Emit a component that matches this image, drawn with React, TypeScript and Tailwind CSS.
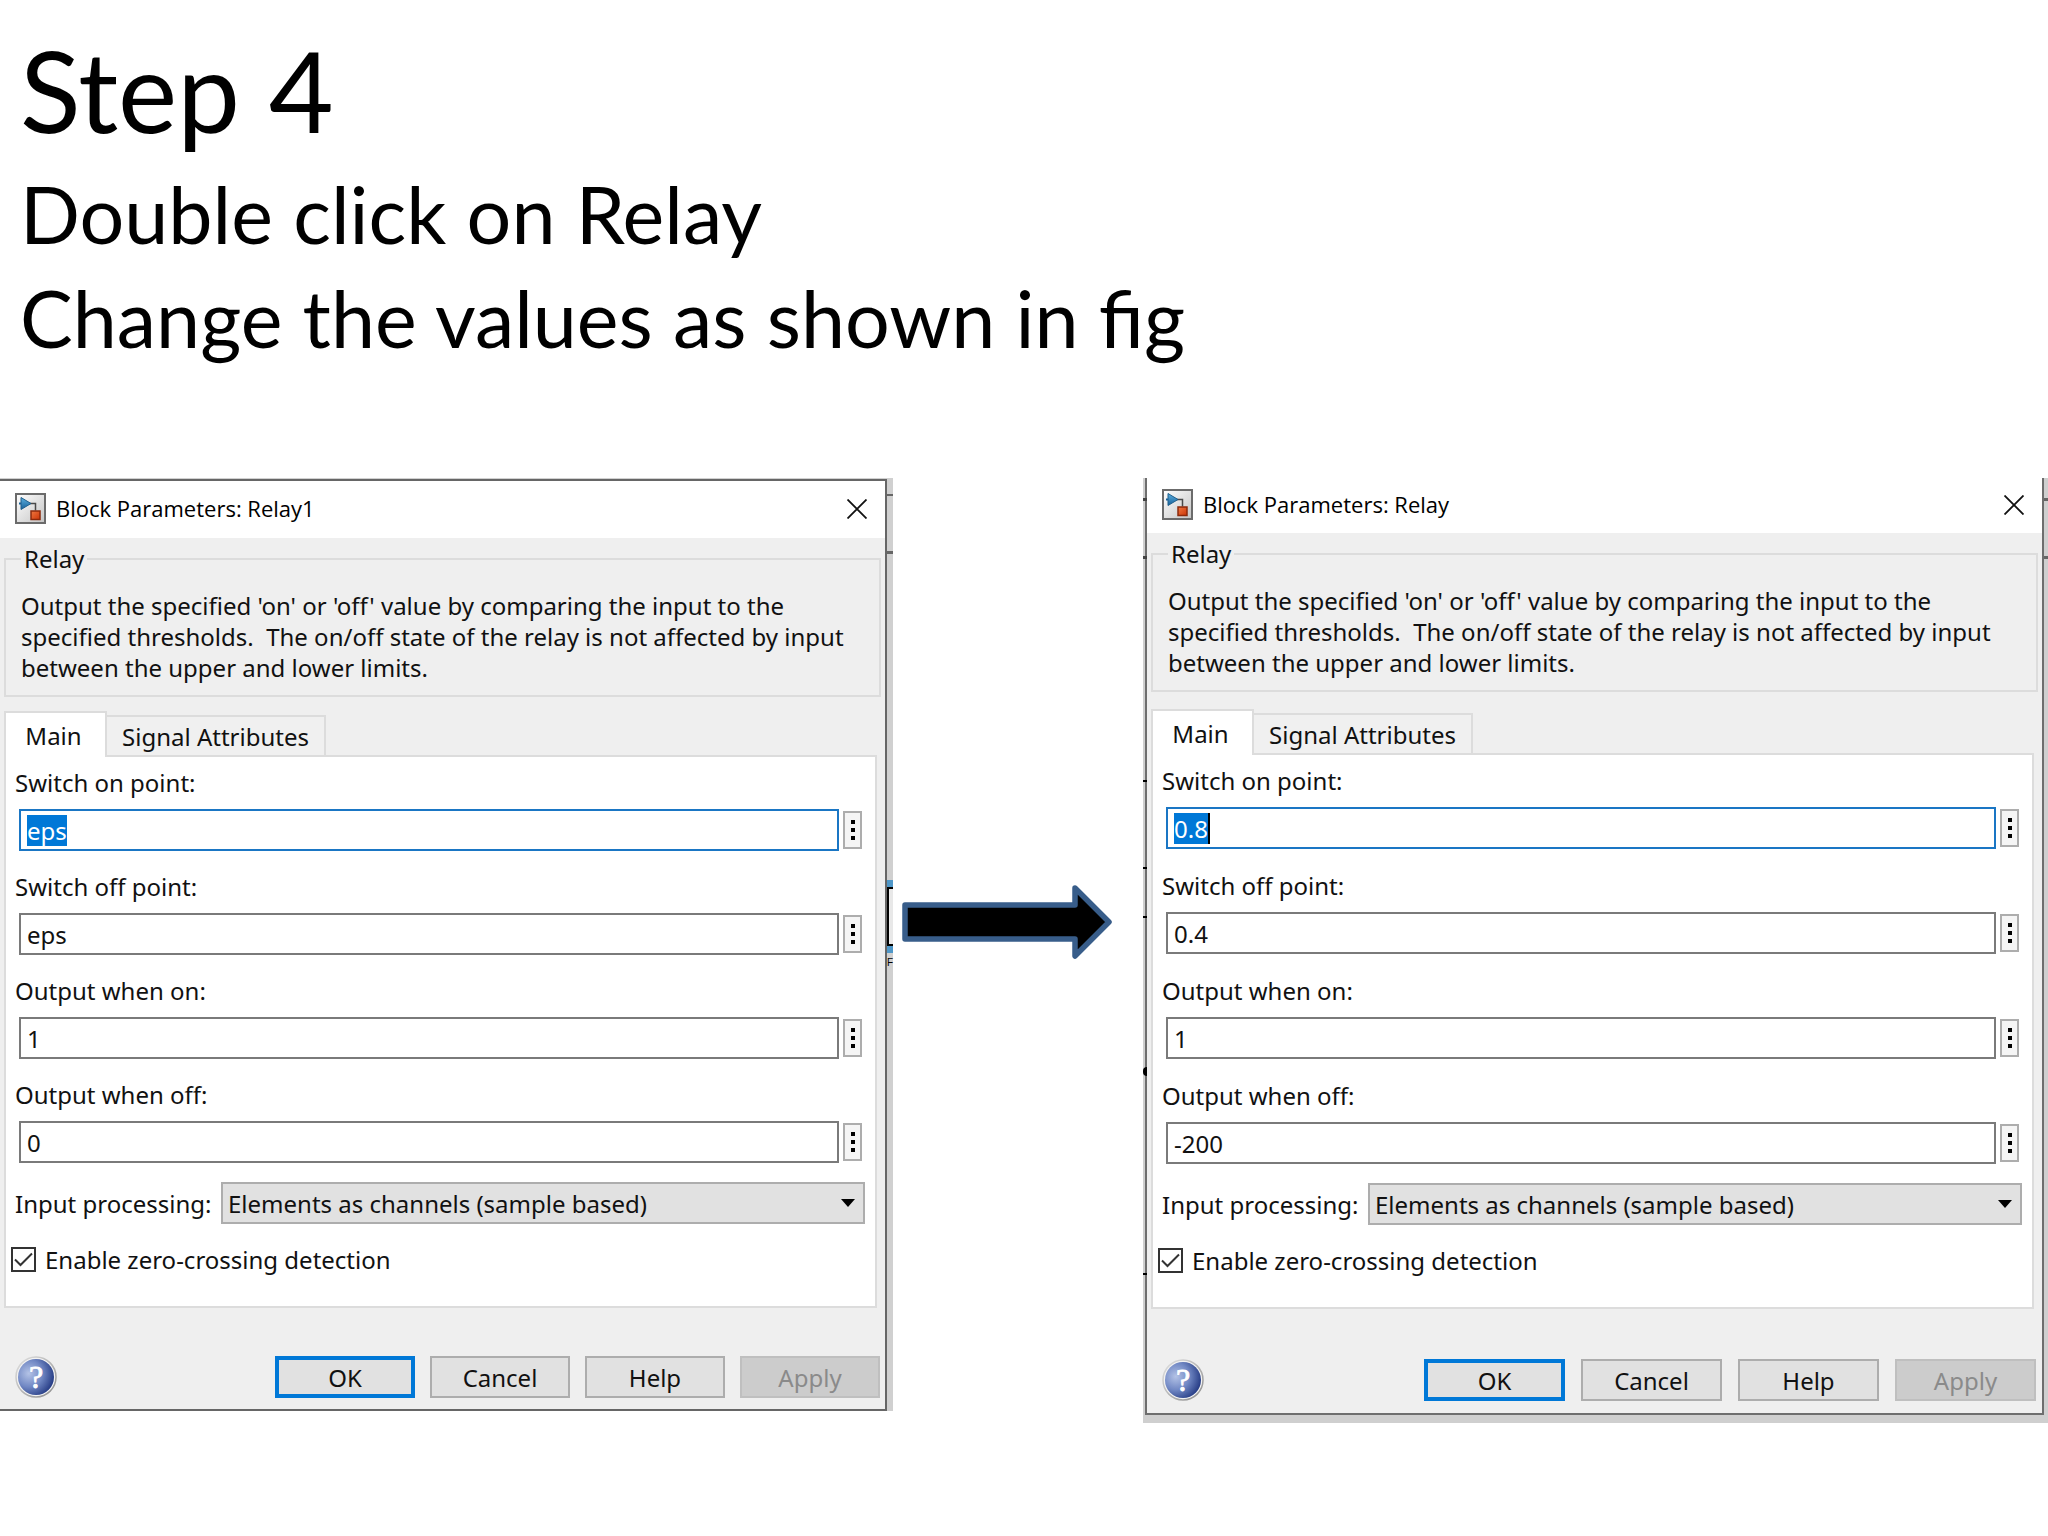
import clsx from "clsx";

type Field = { label: string; value: string; selected?: boolean; caret?: boolean };

type Look = {
  titleBar: string;
  group: string;
  tabs: string;
  rows: string;
  footer: string;
  button: string;
};

const relay1Fields: Field[] = [
  { label: "Switch on point:", value: "eps", selected: true },
  { label: "Switch off point:", value: "eps" },
  { label: "Output when on:", value: "1" },
  { label: "Output when off:", value: "0" },
];

const relayFields: Field[] = [
  { label: "Switch on point:", value: "0.8", selected: true, caret: true },
  { label: "Switch off point:", value: "0.4" },
  { label: "Output when on:", value: "1" },
  { label: "Output when off:", value: "-200" },
];

const description = `Output the specified 'on' or 'off' value by comparing the input to the
specified thresholds.  The on/off state of the relay is not affected by input
between the upper and lower limits.`;

const compact: Look = {
  titleBar: "h-[57px]",
  group: "mt-[5px]",
  tabs: "mt-[14px]",
  rows: "gap-5",
  footer: "gap-[15px] pt-12 pr-[5px] pb-[11px]",
  button: "w-[140px]",
};

const roomy: Look = {
  titleBar: "h-[55px]",
  group: "mt-[5px]",
  tabs: "mt-[17px]",
  rows: "gap-[21px]",
  footer: "gap-4 pt-[50px] pr-[6px] pb-3",
  button: "w-[141px]",
};

function BlockIcon() {
  return (
    <svg viewBox="0 0 31 31" className="size-[31px] shrink-0" aria-hidden="true">
      <defs>
        <linearGradient id="tile" x1="0" y1="0" x2="1" y2="1">
          <stop offset="0" stopColor="#ffffff" />
          <stop offset="1" stopColor="#c4c4c4" />
        </linearGradient>
        <linearGradient id="tri" x1="0" y1="0" x2="0" y2="1">
          <stop offset="0" stopColor="#5cb0e0" />
          <stop offset="1" stopColor="#17619a" />
        </linearGradient>
        <linearGradient id="sq" x1="0" y1="0" x2="1" y2="1">
          <stop offset="0" stopColor="#f07840" />
          <stop offset="1" stopColor="#cc3508" />
        </linearGradient>
      </defs>
      <rect x="1" y="1" width="29" height="29" fill="url(#tile)" stroke="#6b6b6b" strokeWidth="2" />
      <path d="M15 10.500h5.500v7" fill="none" stroke="#4a4a4a" strokeWidth="1.500" />
      <path d="M4 10.500h3" stroke="#17619a" strokeWidth="2" />
      <path d="M6 4.500 16 10.500 6 16.500Z" fill="url(#tri)" stroke="#1f5f8c" />
      <rect x="16" y="18" width="9" height="8.500" fill="url(#sq)" stroke="#8c2a0c" strokeWidth="1.500" />
    </svg>
  );
}

function HelpIcon() {
  return (
    <svg viewBox="0 0 42 42" className="size-[42px]" aria-hidden="true">
      <defs>
        <radialGradient id="ball" cx="0.3" cy="0.4" r="0.75">
          <stop offset="0" stopColor="#b4c3e6" />
          <stop offset="0.5" stopColor="#7188c4" />
          <stop offset="1" stopColor="#1f357f" />
        </radialGradient>
        <linearGradient id="rim" x1="0" y1="0" x2="1" y2="1">
          <stop offset="0" stopColor="#e2e2e2" />
          <stop offset="1" stopColor="#8c8c8c" />
        </linearGradient>
      </defs>
      <circle cx="21" cy="21" r="20" fill="#f2f2f2" stroke="url(#rim)" strokeWidth="1.500" />
      <circle cx="21" cy="21" r="18" fill="url(#ball)" />
      <text
        x="21"
        y="32"
        textAnchor="middle"
        fontSize="32"
        fill="#ffffff"
        stroke="#ffffff"
        strokeWidth="0.800"
        fontFamily="Liberation Serif, serif"
      >
        ?
      </text>
    </svg>
  );
}

function ParameterRow({ id, field }: { id: string; field: Field }) {
  return (
    <div>
      <label htmlFor={id} className="block pl-[9px]">
        {field.label}
      </label>
      <div className="mt-[11px] flex items-center gap-1 px-[13px]">
        <div
          className={clsx(
            "flex h-[42px] min-w-0 flex-1 items-center border-2 bg-white px-[6px]",
            field.selected ? "border-[#1a76c4]" : "border-[#7a7a7a]"
          )}
        >
          <input
            id={id}
            type="text"
            defaultValue={field.value}
            className={clsx(
              "h-[31px] outline-none",
              field.selected ? "field-sizing-content bg-[#0078d7] text-white" : "w-full",
              field.caret && "border-r-2 border-black"
            )}
          />
        </div>
        <button
          type="button"
          aria-label={`${field.label} more options`}
          className="flex h-[38px] w-[19px] flex-col items-center justify-center gap-1 border-2 border-[#adadad] bg-[#f5f5f5]"
        >
          <span className="size-1 bg-black" />
          <span className="size-1 bg-black" />
          <span className="size-1 bg-black" />
        </button>
      </div>
    </div>
  );
}

function BlockDialog({ id, title, fields, look }: { id: string; title: string; fields: Field[]; look: Look }) {
  const button = clsx("h-[42px]", look.button);

  return (
    <section
      aria-label={title}
      className="bg-[#efefef] font-['Noto_Sans',sans-serif] text-[24px] leading-[31px] text-[#111]"
    >
      <header className={clsx("flex items-center bg-white pr-[18px] pb-[2px] pl-[15px]", look.titleBar)}>
        <BlockIcon />
        <h2 className="ml-[10px] flex-1 font-['Open_Sans',sans-serif] text-[22px] text-black">{title}</h2>
        <button type="button" aria-label="Close">
          <svg viewBox="0 0 20 20" className="size-5" aria-hidden="true">
            <path d="M0.500 0.500 19.500 19.500M19.500 0.500 0.500 19.500" stroke="#111" strokeWidth="1.800" />
          </svg>
        </button>
      </header>

      <fieldset className={clsx("mx-1 border-2 border-[#dcdcdc] pt-4 pr-2 pb-3 pl-[15px]", look.group)}>
        <legend className="px-[3px]">Relay</legend>
        <p className="whitespace-pre">{description}</p>
      </fieldset>

      <div role="tablist" className={clsx("relative ml-1 flex items-end", look.tabs)}>
        <button
          type="button"
          role="tab"
          aria-selected="true"
          className="-mb-[2px] h-[46px] w-[103px] border-2 border-b-0 border-[#dcdcdc] bg-white pr-1"
        >
          Main
        </button>
        <button
          type="button"
          role="tab"
          aria-selected="false"
          className="h-10 w-[219px] border-2 border-b-0 border-l-0 border-[#dcdcdc] bg-[#f0f0f0]"
        >
          Signal Attributes
        </button>
      </div>

      <div className="mr-2 ml-1 border-2 border-[#dcdcdc] bg-white pt-[10px] pb-[31px]">
        <div className={clsx("flex flex-col", look.rows)}>
          {fields.map((f, i) => (
            <ParameterRow key={f.label} id={`${id}-${i}`} field={f} />
          ))}
        </div>

        <div className="mt-[19px] flex items-center pr-[10px] pl-[9px]">
          <label htmlFor={`${id}-mode`} className="w-[206px]">
            Input processing:
          </label>
          <div className="relative flex-1">
            <select
              id={`${id}-mode`}
              className="block h-[42px] w-full appearance-none border-2 border-[#adadad] bg-[#e1e1e1] pl-[5px]"
            >
              <option>Elements as channels (sample based)</option>
            </select>
            <svg
              viewBox="0 0 14 8"
              className="pointer-events-none absolute top-[17px] right-[10px] h-2 w-[14px]"
              aria-hidden="true"
            >
              <path d="M0 0h14L7 8Z" fill="#000" />
            </svg>
          </div>
        </div>

        <label className="mt-5 flex items-center pl-[5px]">
          <span className="relative flex size-[25px]">
            <input
              type="checkbox"
              defaultChecked
              className="size-[25px] appearance-none border-2 border-[#333] bg-white"
            />
            <svg viewBox="0 0 25 25" className="pointer-events-none absolute inset-0" aria-hidden="true">
              <path d="M4 12.500 9.500 18 21 6.500" fill="none" stroke="#333" strokeWidth="2" />
            </svg>
          </span>
          <span className="ml-[9px]">Enable zero-crossing detection</span>
        </label>
      </div>

      <footer className={clsx("flex pl-[15px]", look.footer)}>
        <button type="button" aria-label="What is this" className="mr-auto">
          <HelpIcon />
        </button>
        <button type="button" className={clsx(button, "border-4 border-[#0078d7] bg-[#e1e1e1]")}>
          OK
        </button>
        <button type="button" className={clsx(button, "border-2 border-[#adadad] bg-[#e1e1e1]")}>
          Cancel
        </button>
        <button type="button" className={clsx(button, "border-2 border-[#adadad] bg-[#e1e1e1]")}>
          Help
        </button>
        <button
          type="button"
          disabled
          className={clsx(button, "border-2 border-[#bfbfbf] bg-[#cccccc] text-[#8a8a8a]")}
        >
          Apply
        </button>
      </footer>
    </section>
  );
}

function Arrow() {
  return (
    <svg viewBox="0 0 210 74" className="ml-[9px] h-[74px] w-[210px]" aria-hidden="true">
      <path
        d="M3 20H173V3L207 37 173 71V54H3Z"
        fill="#000"
        stroke="#385d8a"
        strokeWidth="5.500"
        strokeLinejoin="round"
      />
    </svg>
  );
}

export default function App() {
  return (
    <main className="min-h-screen bg-white pt-[26px] text-black">
      <div className="pl-5 font-['Lato',sans-serif]">
        <h1 className="text-[112px] leading-[128px]">Step 4</h1>
        <p className="mt-2 text-[79px] leading-[104px]">
          Double click on Relay
          <br />
          Change the values as shown in fig
        </p>
      </div>

      <div className="mt-27 grid grid-cols-[893fr_250fr_905fr] items-start">
        {/* Relay1, with a sliver of the model window showing behind it */}
        <div className="relative bg-[#d0d0d0] pt-[1px] pr-[6px]">
          <div className="border-t-2 border-r-2 border-b-2 border-[#666]">
            <BlockDialog id="relay1" title="Block Parameters: Relay1" fields={relay1Fields} look={compact} />
          </div>
          <div className="absolute inset-y-0 right-0 w-[6px]">
            <div className="absolute top-4 h-[2px] w-full bg-[#666]" />
            <div className="absolute top-[73px] h-[3px] w-full bg-[#666]" />
            <div className="absolute top-[402px] h-[73px] w-full border-y-[7px] border-[#4f97c8] bg-[#e8e8e8]">
              <div className="h-full w-full border-2 border-r-0 border-black" />
            </div>
            <div className="absolute top-[475px] left-0 font-['Liberation_Sans',sans-serif] text-[10px] leading-5">
              F
            </div>
          </div>
        </div>

        <div className="self-center pb-[58px]">
          <Arrow />
        </div>

        {/* Relay, cropped along its top edge */}
        <div className="relative bg-[#cfcfcf] pr-1 pb-2 pl-[2px]">
          <div className="border-r-2 border-b-2 border-l-2 border-[#6e6e6e]">
            <BlockDialog id="relay" title="Block Parameters: Relay" fields={relayFields} look={roomy} />
          </div>
          <div className="absolute inset-y-0 left-0 w-1 overflow-hidden">
            <div className="absolute top-5 h-[3px] w-full bg-[#444]" />
            <div className="absolute top-[78px] h-[3px] w-full bg-[#444]" />
            <div className="absolute top-[302px] h-[2px] w-full bg-black" />
            <div className="absolute top-[389px] h-[2px] w-full bg-black" />
            <div className="absolute top-[438px] h-[2px] w-full bg-black" />
            <div className="absolute top-[589px] h-[9px] w-2 rounded-full bg-black" />
            <div className="absolute top-[795px] h-[2px] w-full bg-black" />
          </div>
          <div className="absolute inset-y-0 right-0 w-1 overflow-hidden">
            <div className="absolute top-5 h-[3px] w-full bg-[#666]" />
            <div className="absolute top-[78px] h-[3px] w-full bg-[#666]" />
          </div>
        </div>
      </div>
    </main>
  );
}
